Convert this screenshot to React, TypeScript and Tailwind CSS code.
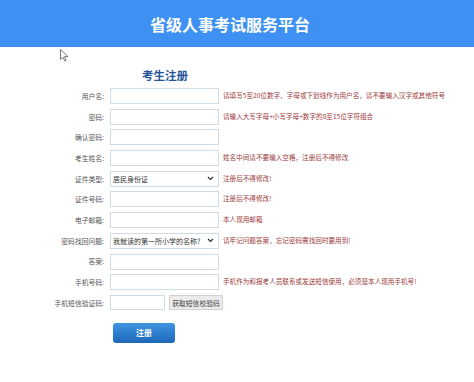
import React from 'react';

const font = { fontFamily: '"Noto Sans CJK SC", "Noto Sans", sans-serif' };

type Row = {
  label: string;
  kind: 'input' | 'select' | 'code';
  value?: string;
  hint?: string;
};

const rows: Row[] = [
  { label: '用户名:', kind: 'input', hint: '请填写5至20位数字、字母或下划线作为用户名，请不要输入汉字或其他符号' },
  { label: '密码:', kind: 'input', hint: '请输入大写字母+小写字母+数字的8至15位字符组合' },
  { label: '确认密码:', kind: 'input' },
  { label: '考生姓名:', kind: 'input', hint: '姓名中间请不要输入空格，注册后不得修改' },
  { label: '证件类型:', kind: 'select', value: '居民身份证', hint: '注册后不得修改!' },
  { label: '证件号码:', kind: 'input', hint: '注册后不得修改!' },
  { label: '电子邮箱:', kind: 'input', hint: '本人现用邮箱' },
  { label: '密码找回问题:', kind: 'select', value: '我就读的第一所小学的名称?', hint: '请牢记问题答案，忘记密码需找回时要用到!' },
  { label: '答案:', kind: 'input' },
  { label: '手机号码:', kind: 'input', hint: '手机作为和报考人员联系或发送短信使用，必须是本人现用手机号!' },
  { label: '手机短信验证码:', kind: 'code' },
];

function Chevron() {
  return (
    <svg width="7" height="5" viewBox="0 0 7 5" className="shrink-0">
      <path d="M1 1 L3.5 3.5 L6 1" fill="none" stroke="#333" strokeWidth="1.2" />
    </svg>
  );
}

function Field({ row }: { row: Row }) {
  if (row.kind === 'select') {
    return (
      <div className="flex h-[16px] w-[109px] items-center justify-between border border-[#cfdde8] bg-white pl-[2px] pr-[4px] text-[7px] text-[#333]">
        <span className="whitespace-nowrap">{row.value}</span>
        <Chevron />
      </div>
    );
  }
  if (row.kind === 'code') {
    return (
      <div className="flex items-center gap-[4px]">
        <div className="h-[15px] w-[55px] border border-[#cfdde8] bg-white" />
        <div className="flex h-[15px] w-[54px] items-center justify-center border border-[#d3d3d3] bg-[#ececec] text-[6.8px] text-[#444]">
          获取短信校验码
        </div>
      </div>
    );
  }
  return <div className="h-[16px] w-[109px] border border-[#cfdde8] bg-white" />;
}

export default function App() {
  return (
    <div className="relative h-[382px] w-[474px] overflow-hidden bg-white" style={font}>
      {/* header */}
      <div className="flex h-[47px] items-center justify-center bg-[#3e91f3] pr-[14px]">
        <h1 className="text-[16px] font-bold text-white">省级人事考试服务平台</h1>
      </div>

      {/* mouse cursor */}
      <svg className="absolute left-[60px] top-[49px]" width="9" height="13" viewBox="0 0 9 13">
        <path d="M0.5 0.5 L0.5 10.5 L3 8.2 L4.8 12 L6.2 11.3 L4.5 7.6 L8 7.6 Z" fill="#fff" stroke="#555" strokeWidth="0.8" />
      </svg>

      <div className="ml-[142px] mt-[21px] h-[14px] text-[11.5px] font-bold leading-[14px] text-[#1f5597]">考生注册</div>

      <div className="mt-[6px] flex flex-col gap-[4.7px]">
        {rows.map((row) => (
          <div key={row.label} className="flex h-[16px] items-center">
            <div className="w-[104px] shrink-0 whitespace-nowrap text-right text-[6.8px] text-[#555]">{row.label}</div>
            <div className="ml-[6px]">
              <Field row={row} />
            </div>
            {row.hint && (
              <div className="ml-[4px] whitespace-nowrap text-[6.6px] text-[#9c3a3a]">{row.hint}</div>
            )}
          </div>
        ))}
      </div>

      <button className="ml-[113px] mt-[12px] flex h-[20px] w-[62px] items-center justify-center rounded-[3px] bg-gradient-to-b from-[#3f95e3] to-[#1c68b6] text-[8px] font-bold text-white">
        注册
      </button>
    </div>
  );
}
